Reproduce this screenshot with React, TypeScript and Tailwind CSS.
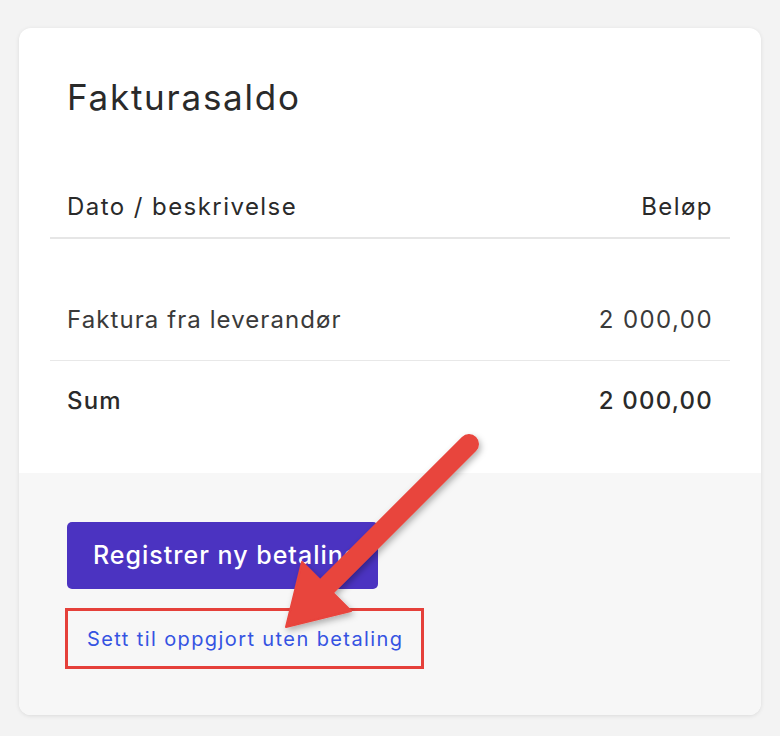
import React from "react";

// ─── Dados ────────────────────────────────────────────────────────────────────

const LINJER = [{ tekst: "Faktura fra leverandør", belop: "2 000,00" }];
const SUM = "2 000,00";

const FONT = { fontFamily: "Inter, 'Noto Sans', sans-serif" };

// ─── Pil (annotering over innholdet) ──────────────────────────────────────────

function Pil() {
  return (
    <svg
      className="pointer-events-none absolute left-0 top-0"
      width="780"
      height="736"
      viewBox="0 0 780 736"
      aria-hidden="true"
    >
      <defs>
        <filter id="skygge" x="-20%" y="-20%" width="140%" height="140%">
          <feDropShadow dx="2" dy="3" stdDeviation="3" floodColor="#000" floodOpacity="0.3" />
        </filter>
      </defs>
      <g filter="url(#skygge)" fill="#e8443c" stroke="#e8443c">
        <line x1="469" y1="444" x2="322" y2="591" strokeWidth="20" strokeLinecap="round" />
        <polygon points="286,627 302,562 351,611" strokeWidth="2" strokeLinejoin="round" />
      </g>
    </svg>
  );
}

// ─── Komponent ────────────────────────────────────────────────────────────────

export default function App() {
  return (
    <div className="relative h-[736px] w-[780px] overflow-hidden bg-[#f3f3f3]" style={FONT}>
      <div className="ml-[19px] mt-[28px] w-[742px] overflow-hidden rounded-[12px] bg-white shadow-[0_1px_4px_rgba(0,0,0,0.1)]">
        {/* Tabell */}
        <div className="px-[31px]">
          <h1 className="pl-[17px] pt-[47px] text-[35px] leading-[44px] font-normal tracking-[0.05em] text-[#2a2a2a]">
            Fakturasaldo
          </h1>

          <div className="mt-[72px] flex items-center justify-between border-b-2 border-[#e6e6e6] px-[17px] pb-[14px] text-[24px] leading-[32px] tracking-[0.06em] text-[#2a2a2a]">
            <span>Dato / beskrivelse</span>
            <span>Beløp</span>
          </div>

          {LINJER.map((l) => (
            <div
              key={l.tekst}
              className="flex items-center justify-between border-b border-[#e8e8e8] px-[17px] pt-[65px] pb-[24px] text-[24px] leading-[32px] tracking-[0.045em] text-[#3a3a3a]"
            >
              <span>{l.tekst}</span>
              <span className="tracking-[0.06em]">{l.belop}</span>
            </div>
          ))}

          <div className="flex items-center justify-between px-[17px] pt-[24px] pb-[56px] text-[24px] leading-[32px] font-medium tracking-[0.05em] text-[#2a2a2a]">
            <span>Sum</span>
            <span>{SUM}</span>
          </div>
        </div>

        {/* Handlinger */}
        <div className="bg-[#f7f7f7] pt-[49px] pb-[46px]">
          <button className="ml-[48px] flex h-[67px] w-[311px] items-center overflow-hidden whitespace-nowrap rounded-[5px] bg-[#4b33c1] px-[26px] text-[25px] font-medium tracking-[0.04em] text-white">
            Registrer ny betaling
          </button>
          <div className="ml-[46px] mt-[19px] flex h-[61px] w-[359px] items-center border-[3px] border-[#e5403a] pl-[19px]">
            <a href="#" className="whitespace-nowrap text-[20px] leading-none tracking-[0.07em] text-[#3553e2]">
              Sett til oppgjort uten betaling
            </a>
          </div>
        </div>
      </div>

      <Pil />
    </div>
  );
}
